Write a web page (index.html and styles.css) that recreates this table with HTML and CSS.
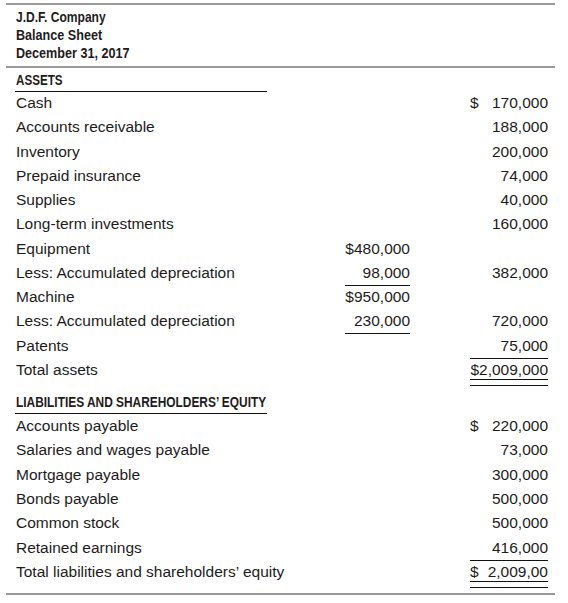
FILE: index.html
```html
<!DOCTYPE html>
<html lang="en">
<head>
<meta charset="utf-8">
<title>J.D.F. Company Balance Sheet</title>
<link rel="stylesheet" href="styles.css">
</head>
<body>
<div class="sheet">
  <header class="title">
    <div><span class="cond c-company">J.D.F. Company</span></div>
    <div><span class="cond c-bs">Balance Sheet</span></div>
    <div><span class="cond c-date">December 31, 2017</span></div>
  </header>

  <section class="section assets">
    <h2 class="sec-head"><span class="cond c-assets">ASSETS</span></h2>
    <div class="rows">
      <div class="row"><span class="label">Cash</span><span class="mid"></span><span class="amt cur"><span>$</span><span>170,000</span></span></div>
      <div class="row"><span class="label">Accounts receivable</span><span class="mid"></span><span class="amt">188,000</span></div>
      <div class="row"><span class="label">Inventory</span><span class="mid"></span><span class="amt">200,000</span></div>
      <div class="row"><span class="label">Prepaid insurance</span><span class="mid"></span><span class="amt">74,000</span></div>
      <div class="row"><span class="label">Supplies</span><span class="mid"></span><span class="amt">40,000</span></div>
      <div class="row"><span class="label">Long-term investments</span><span class="mid"></span><span class="amt">160,000</span></div>
      <div class="row"><span class="label">Equipment</span><span class="mid">$480,000</span><span class="amt"></span></div>
      <div class="row"><span class="label">Less: Accumulated depreciation</span><span class="mid"><span class="ul">98,000</span></span><span class="amt">382,000</span></div>
      <div class="row"><span class="label">Machine</span><span class="mid">$950,000</span><span class="amt"></span></div>
      <div class="row"><span class="label">Less: Accumulated depreciation</span><span class="mid"><span class="ul">230,000</span></span><span class="amt">720,000</span></div>
      <div class="row"><span class="label">Patents</span><span class="mid"></span><span class="amt"><span class="ul">75,000</span></span></div>
      <div class="row"><span class="label">Total assets</span><span class="mid"></span><span class="amt"><span class="dbl"><span class="dbl-in">$2,009,000</span></span></span></div>
    </div>
  </section>

  <section class="section liab">
    <h2 class="sec-head"><span class="cond c-liab">LIABILITIES AND SHAREHOLDERS’ EQUITY</span></h2>
    <div class="rows">
      <div class="row"><span class="label">Accounts payable</span><span class="mid"></span><span class="amt cur"><span>$</span><span>220,000</span></span></div>
      <div class="row"><span class="label">Salaries and wages payable</span><span class="mid"></span><span class="amt">73,000</span></div>
      <div class="row"><span class="label">Mortgage payable</span><span class="mid"></span><span class="amt">300,000</span></div>
      <div class="row"><span class="label">Bonds payable</span><span class="mid"></span><span class="amt">500,000</span></div>
      <div class="row"><span class="label">Common stock</span><span class="mid"></span><span class="amt">500,000</span></div>
      <div class="row"><span class="label">Retained earnings</span><span class="mid"></span><span class="amt"><span class="ul">416,000</span></span></div>
      <div class="row"><span class="label">Total liabilities and shareholders’ equity</span><span class="mid"></span><span class="amt"><span class="dbl"><span class="dbl-in cur"><span>$</span><span>2,009,00</span></span></span></span></div>
    </div>
  </section>
</div>
</body>
</html>
```

FILE: styles.css
```css
* { box-sizing: border-box; }

html, body {
  margin: 0;
  padding: 0;
  background: #ffffff;
}

body {
  font-family: "Liberation Sans", Arial, sans-serif;
  font-size: 15.5px;
  color: #1e1b1c;
}

.sheet {
  margin: 3px 0 0 6px;
  width: 549px;
  border-top: 2px solid #9a9a9a;
  border-bottom: 2px solid #9a9a9a;
  padding-bottom: 5.8px;
}

.title {
  padding: 3px 0 4px 10px;
  border-bottom: 2px solid #9a9a9a;
  font-weight: bold;
  font-size: 14px;
  line-height: 18px;
  white-space: nowrap;
}

.cond {
  display: inline-block;
  transform-origin: left center;
  white-space: nowrap;
}
.c-company { transform: scaleX(0.86); }
.c-bs { transform: scaleX(0.9); }
.c-date { transform: scaleX(0.9); }
.c-assets { transform: scaleX(0.83); }
.c-liab { transform: scaleX(0.85); }

.sec-head {
  margin: 0 0 0 9px;
  width: 252px;
  padding: 0 0 2px 1px;
  border-bottom: 1px solid #111;
  font-weight: bold;
  font-size: 14px;
  line-height: 18px;
  white-space: nowrap;
}

.assets .sec-head { margin-top: 3px; }
.liab .sec-head { margin-top: 7.8px; }

.rows {
  padding: 0 7px 0 10px;
}
.assets .rows { padding-top: 2px; }
.liab .rows { padding-top: 3.2px; }

.row {
  display: grid;
  grid-template-columns: 1fr 65px 78px;
  column-gap: 60px;
  height: 24.27px;
  line-height: 18px;
  white-space: nowrap;
}

.mid, .amt {
  text-align: right;
}

.cur {
  display: flex;
  justify-content: space-between;
}

.ul {
  display: block;
  border-bottom: 1px solid #111;
  padding-bottom: 3px;
}

.dbl {
  display: block;
  border-bottom: 1px solid #111;
  padding-bottom: 5px;
}

.dbl-in {
  display: block;
  border-bottom: 1px solid #111;
}
.dbl-in.cur { display: flex; }
```
